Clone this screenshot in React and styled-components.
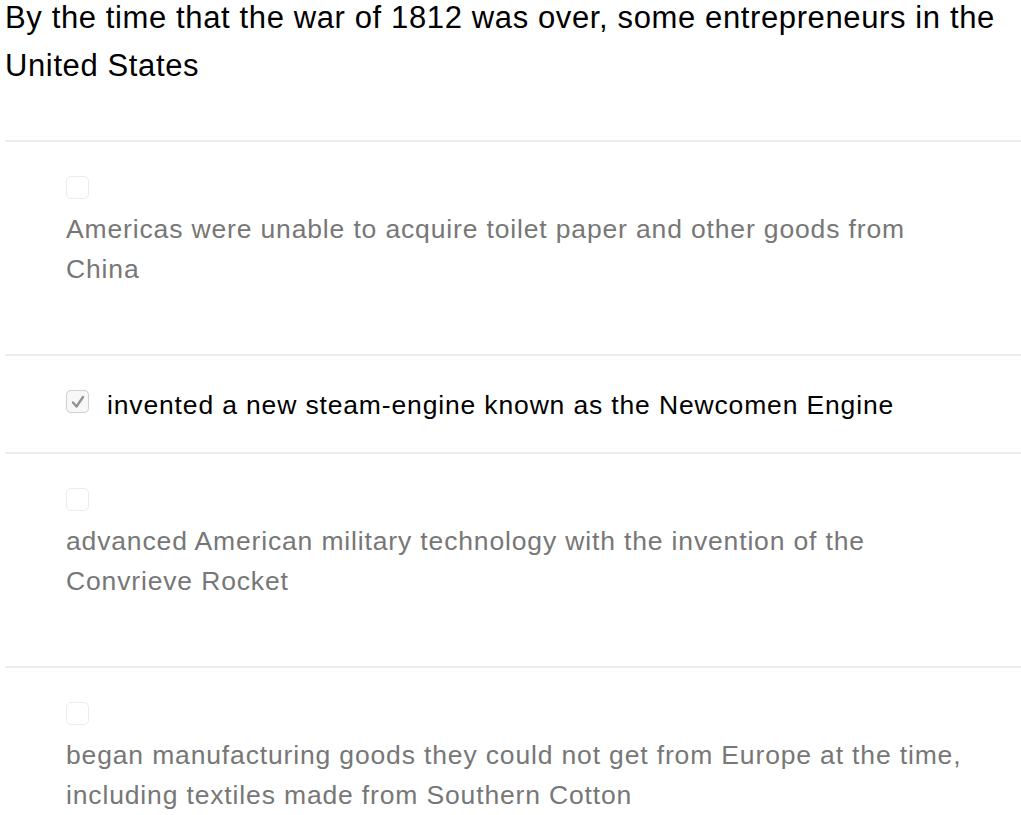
import React from "react";
import styled, { createGlobalStyle } from "styled-components";

const Global = createGlobalStyle`
  html, body { margin: 0; padding: 0; background: #ffffff; }
  body { font-family: "Liberation Sans", Arial, sans-serif; }
`;

const Page = styled.div`
  padding-left: 5px;
  overflow: hidden;
`;

const Question = styled.h1`
  margin: -6px 0 50px 0;
  font-size: 31px;
  line-height: 48px;
  letter-spacing: 0.62px;
  font-weight: 400;
  color: #000;
`;

const List = styled.ul`
  list-style: none;
  margin: 0;
  padding: 0;
`;

const Option = styled.li`
  border-top: 2px solid #ececec;
  display: flex;
  flex-direction: ${(p) => (p.$inline ? "row" : "column")};
  align-items: flex-start;
  gap: ${(p) => (p.$inline ? "18px" : "10px")};
  padding: ${(p) => (p.$inline ? "29px 0 27px 61px" : "34px 0 0 61px")};
  height: ${(p) => (p.$inline ? "auto" : "214px")};
  box-sizing: border-box;
`;

const Box = styled.span`
  flex: none;
  width: 23px;
  height: 23px;
  margin-top: ${(p) => (p.$checked ? "5px" : "0")};
  box-sizing: border-box;
  border: ${(p) => (p.$checked ? "1.5px solid #d2d2d2" : "1px solid #ebebeb")};
  border-radius: 5px;
  background: ${(p) => (p.$checked ? "#f7f7f7" : "#fff")};
  box-shadow: ${(p) => (p.$checked ? "0 0 1px #e0e0e0" : "none")};
  display: flex;
  align-items: center;
  justify-content: center;
  overflow: hidden;
`;

const Label = styled.span`
  font-size: 26.5px;
  line-height: 40px;
  letter-spacing: 0.85px;
  color: ${(p) => (p.$checked ? "#000" : "#777")};
  max-width: 898px;
`;

const options = [
  {
    text: "Americas were unable to acquire toilet paper and other goods from China",
  },
  {
    text: "invented a new steam-engine known as the Newcomen Engine",
    checked: true,
  },
  {
    text: "advanced American military technology with the invention of the Convrieve Rocket",
  },
  {
    text: "began manufacturing goods they could not get from Europe at the time, including textiles made from Southern Cotton",
  },
];

export default function App() {
  return (
    <Page>
      <Global />
      <Question>
        By the time that the war of 1812 was over, some entrepreneurs in the United States
      </Question>
      <List>
        {options.map((o, i) => (
          <Option key={i} $inline={o.checked}>
            <Box $checked={o.checked}>
              {o.checked && (
                <svg width="20" height="20" viewBox="0 0 20 20">
                  <path
                    d="M5 10.5 L8.5 14.5 L15 5"
                    fill="none"
                    stroke="#939393"
                    strokeWidth="2.4"
                    strokeLinecap="round"
                    strokeLinejoin="round"
                  />
                </svg>
              )}
            </Box>
            <Label $checked={o.checked}>{o.text}</Label>
          </Option>
        ))}
      </List>
    </Page>
  );
}
